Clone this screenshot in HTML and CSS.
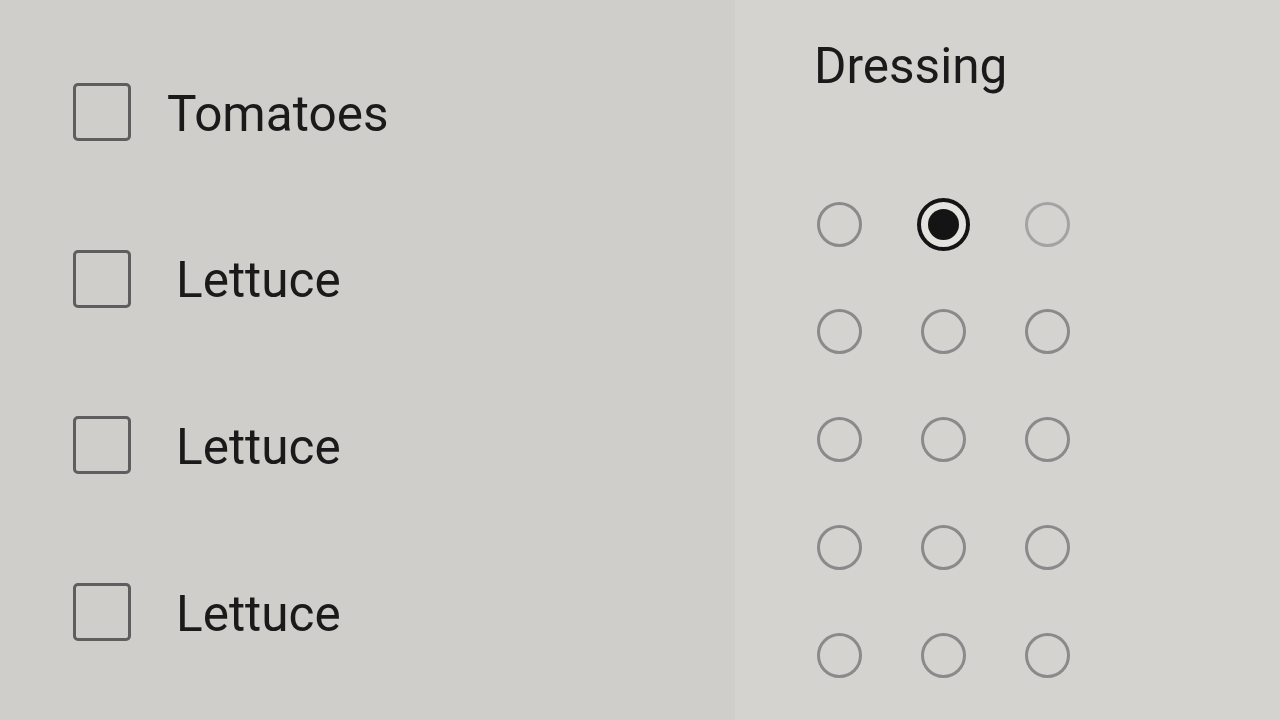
FILE: index.html
```html
<!DOCTYPE html>
<html>
<head>
<meta charset="utf-8">
<link rel="stylesheet" href="styles.css">
</head>
<body>
<div class="page">
  <div class="left">
    <div class="item"><span class="box"></span><span class="label first">Tomatoes</span></div>
    <div class="item"><span class="box"></span><span class="label">Lettuce</span></div>
    <div class="item"><span class="box"></span><span class="label">Lettuce</span></div>
    <div class="item"><span class="box"></span><span class="label">Lettuce</span></div>
  </div>
  <div class="right">
    <div class="title">Dressing</div>
    <div class="grid">
      <span class="cell"><span class="radio"></span></span>
      <span class="cell"><span class="radio on"><span class="dot"></span></span></span>
      <span class="cell"><span class="radio light"></span></span>
      <span class="cell"><span class="radio"></span></span>
      <span class="cell"><span class="radio"></span></span>
      <span class="cell"><span class="radio"></span></span>
      <span class="cell"><span class="radio"></span></span>
      <span class="cell"><span class="radio"></span></span>
      <span class="cell"><span class="radio"></span></span>
      <span class="cell"><span class="radio"></span></span>
      <span class="cell"><span class="radio"></span></span>
      <span class="cell"><span class="radio"></span></span>
      <span class="cell"><span class="radio"></span></span>
      <span class="cell"><span class="radio"></span></span>
      <span class="cell"><span class="radio"></span></span>
    </div>
  </div>
</div>
</body>
</html>
```

FILE: styles.css
```css
html, body {
  margin: 0;
  padding: 0;
  width: 1280px;
  height: 720px;
  overflow: hidden;
  background: #d1cfcc;
  font-family: Roboto, "Liberation Sans", sans-serif;
  color: #1a1a1a;
}

.page {
  display: flex;
  width: 1280px;
  height: 720px;
}

.left {
  width: 735px;
  background: #d0cecb;
  box-sizing: border-box;
  padding-top: 83px;
  padding-left: 73px;
  display: flex;
  flex-direction: column;
  gap: 108.67px;
}

.item {
  display: flex;
  align-items: center;
  height: 58px;
}

.box {
  width: 58px;
  height: 58px;
  box-sizing: border-box;
  border: 3px solid #5e5e5e;
  border-radius: 5px;
  flex: none;
}

.label {
  font-size: 49.5px;
  margin-left: 45px;
  margin-top: 5px;
  line-height: 1;
}

.label.first {
  margin-left: 36px;
}

.right {
  flex: 1;
  background: #d5d3d0;
  box-sizing: border-box;
  padding-left: 81px;
  padding-top: 38px;
}

.title {
  font-size: 49.5px;
  line-height: 56px;
  margin-left: -2px;
}

.grid {
  margin-top: 100px;
  display: grid;
  grid-template-columns: repeat(3, 104px);
  grid-auto-rows: 107.75px;
  margin-left: -29px;
}

.cell {
  display: flex;
  align-items: center;
  justify-content: center;
  height: 60px;
}

.radio {
  width: 45px;
  height: 45px;
  box-sizing: border-box;
  border: 3px solid #8a8a8a;
  border-radius: 50%;
  display: flex;
  align-items: center;
  justify-content: center;
}

.radio.light {
  border-color: #a3a3a3;
}

.radio.on {
  width: 53px;
  height: 53px;
  border: 4px solid #141414;
  background: #e4e2df;
}

.dot {
  width: 31px;
  height: 31px;
  border-radius: 50%;
  background: #141414;
}
```
